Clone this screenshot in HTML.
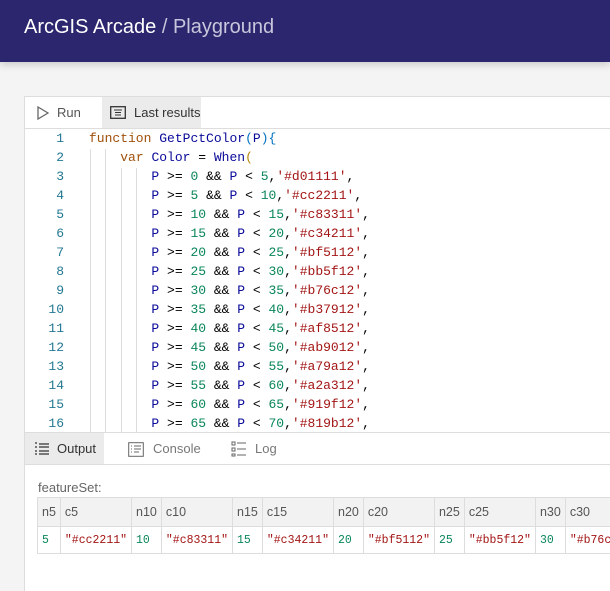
<!DOCTYPE html>
<html><head><meta charset="utf-8"><style>
*{margin:0;padding:0;box-sizing:border-box}
body{width:610px;height:591px;overflow:hidden;background:#f4f4f4;font-family:"Liberation Sans",sans-serif;position:relative}
.hdr{position:absolute;left:0;top:0;width:610px;height:62px;background:#2c266e;box-shadow:0 2px 8px rgba(0,0,0,.2)}
.hdr span{position:absolute;left:24px;top:16px;font-size:20px;color:#fff}
.hdr .g{color:#c8c6dc;position:static}
.panel{position:absolute;left:24px;top:96px;width:586px;height:495px;background:#fff;border:1px solid #ddd;border-right:none;border-bottom:none;overflow:hidden}
.tb{position:absolute;left:0;top:0;width:586px;height:32px;border-bottom:1px solid #ddd;font-size:13px;color:#555}
.tab{position:absolute;top:0;height:31px;line-height:31px}
.code{position:absolute;left:0;top:33px;width:586px;height:302px;overflow:hidden;font-family:"Liberation Mono",monospace;font-size:13px}
.ln{position:absolute;left:0;width:39px;text-align:right;color:#237893}
.cl{position:absolute;left:64px;white-space:pre;color:#000}
.k{color:#a0500a}.i{color:#0a0a9a}.n{color:#098658}.s{color:#a31515}.p{color:#0070c1}.y{color:#b8860b}
.gd{position:absolute;width:1px;background:#ddd}
.bt{position:absolute;left:0;top:335px;width:586px;height:33px;border-top:1px solid #ddd;border-bottom:1px solid #ddd;font-size:13px;color:#777}
.fs{position:absolute;left:13px;top:383px;font-size:13px;color:#666}
.tw{position:absolute;left:12px;top:400px;width:580px;overflow:hidden}
table{border-collapse:collapse;font-size:11.5px}
td,th{border:1px solid #ddd;height:29px;padding:0 4px;text-align:left;font-weight:normal;white-space:nowrap}
th{background:#f2f2f2;color:#555;font-family:"Liberation Sans",sans-serif;font-size:12.5px}
td{font-family:"Liberation Mono",monospace;height:27px}
</style></head><body>
<div class="hdr"><span>ArcGIS Arcade <span class="g">/ Playground</span></span></div>
<div class="panel">
 <div class="tb">
  <div class="tab" style="left:0;width:77px;padding-left:32px">Run
   <svg style="position:absolute;left:12px;top:9px" width="12" height="14"><path d="M1 1 L11 7 L1 13 Z" fill="none" stroke="#666" stroke-width="1.3"/></svg></div>
  <div class="tab" style="left:77px;width:99px;background:#ebebeb;padding-left:32px;color:#333">Last results
   <svg style="position:absolute;left:8px;top:9px" width="16" height="13"><rect x=".7" y=".7" width="14.6" height="11.6" fill="none" stroke="#333" stroke-width="1.3"/><path d="M4 4h8M5 6.5h6M5 9h6" stroke="#333"/></svg></div>
 </div>
 <div class="code" id="code"></div>
 <div class="bt">
  <div class="tab" style="left:0;width:79px;background:#ebebeb;padding-left:32px;color:#333;height:31px">Output
   <svg style="position:absolute;left:9px;top:9px" width="16" height="14"><path d="M1 1h2M5 2h10M1 5h2M5 5h10M1 9h2M5 9h10M1 12h2M5 12h10" stroke="#333" stroke-width="1.3"/></svg></div>
  <div class="tab" style="left:103px;padding-left:25px">Console
   <svg style="position:absolute;left:0;top:9px" width="16" height="15"><rect x=".7" y=".7" width="14.6" height="13.6" fill="none" stroke="#666"/><path d="M3 4h1M6 4h7M3 7h1M6 7h7M3 10h1M6 10h5" stroke="#666"/></svg></div>
  <div class="tab" style="left:206px;padding-left:24px">Log
   <svg style="position:absolute;left:0;top:8px" width="16" height="16"><path d="M1 1h3v3h-3zM1 7h3v3h-3zM1 13h3v2h-3z" fill="none" stroke="#666"/><path d="M6 2h9M6 8h9M6 14h9" stroke="#666"/></svg></div>
 </div>
 <div class="fs">featureSet:</div>
 <div class="tw"><table id="tbl"></table></div>
</div>
<script>
var cols=['d01111','cc2211','c83311','c34211','bf5112','bb5f12','b76c12','b37912','af8512','ab9012','a79a12','a2a312','919f12','819b12'];
var h='';
function L(n,html){var t=(n-1)*19;h+='<div class="ln" style="top:'+(t+1)+'px">'+n+'</div><div class="cl" style="top:'+(t+1)+'px">'+html+'</div>';}
L(1,'<span class="k">function</span> <span class="i">GetPctColor</span><span class="p">(</span><span class="i">P</span><span class="p">){</span>');
L(2,'    <span class="k">var</span> <span class="i">Color</span> = <span class="i">When</span><span class="y">(</span>');
for(var i=0;i<14;i++){var a=5*i,b=a+5;L(i+3,'        <span class="i">P</span> >= <span class="n">'+a+'</span> && <span class="i">P</span> < <span class="n">'+b+'</span>,<span class="s">\'#'+cols[i]+'\'</span>,');}
h+='<div class="gd" style="left:65px;top:19px;height:300px"></div><div class="gd" style="left:80px;top:19px;height:300px"></div><div class="gd" style="left:96px;top:38px;height:280px"></div><div class="gd" style="left:111px;top:38px;height:280px"></div>';
document.getElementById('code').innerHTML=h;
var hr='<tr>',dr='<tr>',vals=['cc2211','c83311','c34211','bf5112','bb5f12','b76c12'];
for(var j=0;j<6;j++){var n=5*(j+1);hr+='<th>n'+n+'</th><th>c'+n+'</th>';dr+='<td class="n">'+n+'</td><td class="s">"#'+vals[j]+'"</td>';}
document.getElementById('tbl').innerHTML=hr+'</tr>'+dr+'</tr>';
</script>
</body></html>
